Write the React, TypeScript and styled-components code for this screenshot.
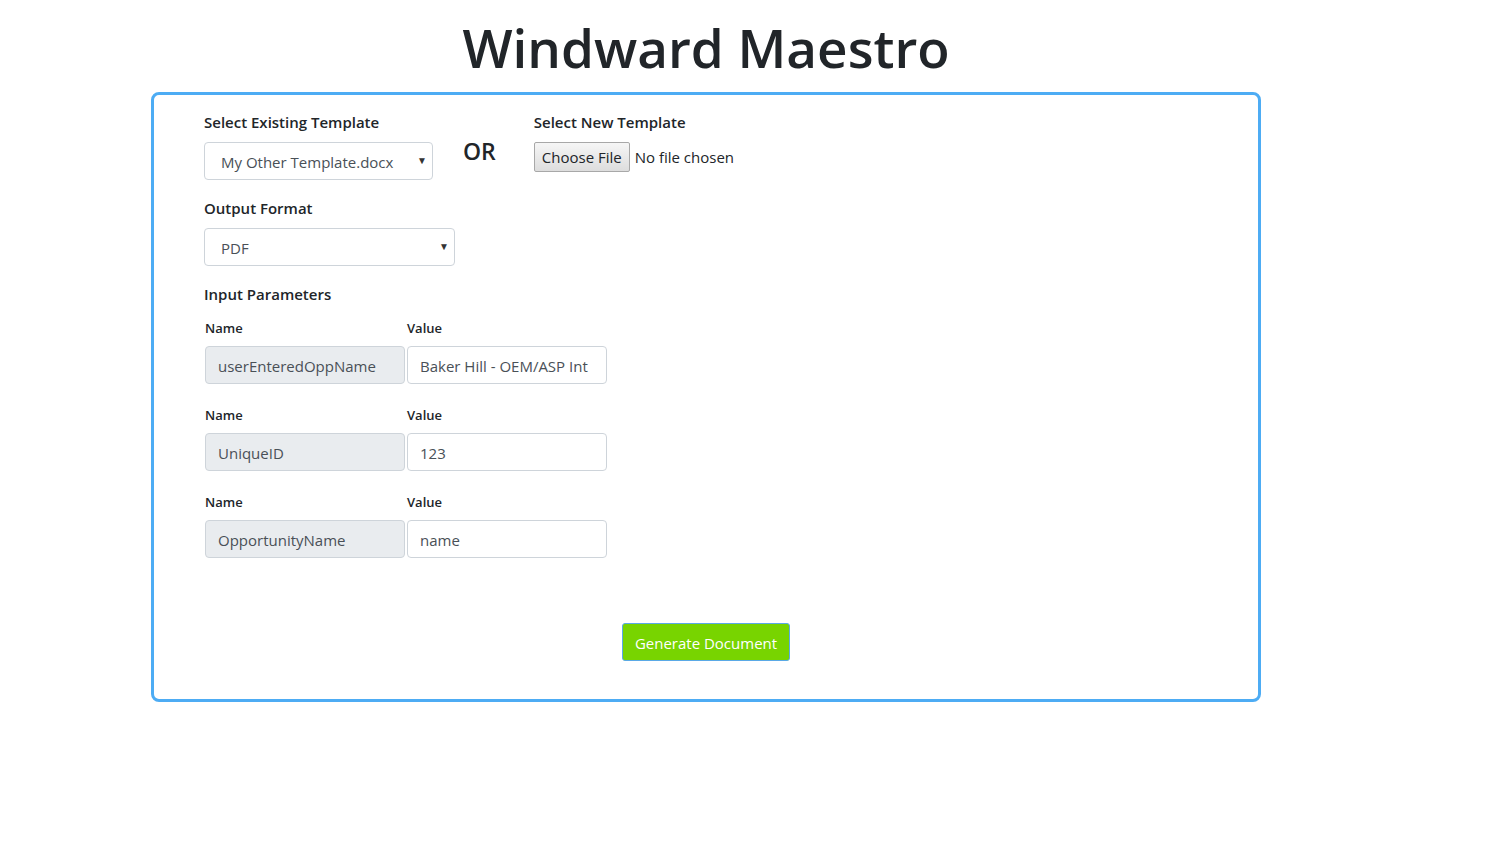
import React from "react";
import styled, { createGlobalStyle } from "styled-components";

const GlobalStyle = createGlobalStyle`
  html, body {
    margin: 0;
    padding: 0;
    background: #ffffff;
  }
  body {
    font-family: "Segoe UI", "Open Sans", "Noto Sans", sans-serif;
    font-size: 15px;
    line-height: 1.5;
    color: #212529;
  }
  * { box-sizing: border-box; }
`;

const Page = styled.div`
  width: 1110px;
  margin-left: 151px;
  padding-top: 12px;
`;

const Title = styled.h1`
  margin: 0 0 10px 0;
  height: 70px;
  text-align: center;
  font-size: 53px;
  font-weight: 600;
  line-height: 72px;
  color: #212529;
`;

const Card = styled.form`
  border: 3px solid #4dacf4;
  border-radius: 8px;
  padding: 15px 50px 38px 50px;
  height: 610px;
`;

const TopRow = styled.div`
  display: flex;
  align-items: flex-start;
`;

const Field = styled.div<{ $width: number; $mb?: number }>`
  width: ${(p) => p.$width}px;
  margin-bottom: ${(p) => (p.$mb ?? 16)}px;
`;

const Label = styled.label`
  display: block;
  margin-bottom: 8px;
  font-size: 15px;
  font-weight: 600;
  line-height: 24px;
  color: #212529;
`;

const SelectWrap = styled.div`
  position: relative;
  width: 100%;
`;

const Select = styled.select`
  appearance: none;
  -webkit-appearance: none;
  display: block;
  width: 100%;
  height: 38px;
  padding: 1px 24px 0 16px;
  font-family: inherit;
  font-size: 15px;
  color: #495057;
  background: #ffffff;
  border: 1px solid #ced4da;
  border-radius: 4px;
  outline: none;
`;

const Caret = styled.span`
  position: absolute;
  right: 6px;
  top: 11px;
  font-size: 10px;
  line-height: 14px;
  color: #333;
  pointer-events: none;
`;

const OrText = styled.div`
  margin: 26px 38px 0 30px;
  font-size: 23px;
  font-weight: 600;
  line-height: 30px;
  color: #212529;
`;

const FileRow = styled.div`
  display: flex;
  align-items: center;
  gap: 5px;
  height: 29px;
`;

const ChooseButton = styled.button`
  height: 30px;
  padding: 0 7px;
  font-family: inherit;
  font-size: 15px;
  color: #212529;
  background: linear-gradient(#f6f6f6, #dddddd);
  border: 1px solid #a8a8a8;
  border-radius: 2px;
`;

const NoFile = styled.span`
  font-size: 15px;
  color: #212529;
  padding-top: 1px;
`;

const SectionLabel = styled(Label)`
  margin-bottom: 11px;
`;

const ParamGroup = styled.div`
  display: grid;
  grid-template-columns: 200px 200px;
  column-gap: 2px;
  margin-left: 1px;
  margin-bottom: 20px;
`;

const SmallLabel = styled.label`
  display: block;
  margin-bottom: 8px;
  padding-top: 1px;
  font-size: 13px;
  font-weight: 600;
  line-height: 20px;
  color: #212529;
`;

const TextInput = styled.input<{ $locked?: boolean }>`
  display: block;
  width: 100%;
  height: 38px;
  padding: 1px 12px 0 12px;
  font-family: inherit;
  font-size: 15px;
  color: #495057;
  background: ${(p) => (p.$locked ? "#e9ecef" : "#ffffff")};
  border: 1px solid #ced4da;
  border-radius: 4px;
  outline: none;
`;

const Actions = styled.div`
  display: flex;
  justify-content: center;
  margin-top: 65px;
`;

const GenerateButton = styled.button`
  height: 38px;
  padding: 1px 12px 0 12px;
  font-family: inherit;
  font-size: 15px;
  color: #ffffff;
  background: #78d400;
  border: 1px solid #5aa9e6;
  border-radius: 3px;
`;

const params = [
  { name: "userEnteredOppName", value: "Baker Hill - OEM/ASP Int" },
  { name: "UniqueID", value: "123" },
  { name: "OpportunityName", value: "name" },
];

export default function App() {
  return (
    <>
      <GlobalStyle />
      <Page>
        <Title>Windward Maestro</Title>
        <Card onSubmit={(e) => e.preventDefault()}>
          <TopRow>
            <Field $width={229}>
              <Label>Select Existing Template</Label>
              <SelectWrap>
                <Select defaultValue="other">
                  <option value="other">My Other Template.docx</option>
                </Select>
                <Caret>▼</Caret>
              </SelectWrap>
            </Field>
            <OrText>OR</OrText>
            <Field $width={300}>
              <Label>Select New Template</Label>
              <FileRow>
                <ChooseButton type="button">Choose File</ChooseButton>
                <NoFile>No file chosen</NoFile>
              </FileRow>
            </Field>
          </TopRow>
          <Field $width={251}>
            <Label>Output Format</Label>
            <SelectWrap>
              <Select defaultValue="pdf">
                <option value="pdf">PDF</option>
              </Select>
              <Caret>▼</Caret>
            </SelectWrap>
          </Field>
          <SectionLabel>Input Parameters</SectionLabel>
          {params.map((p) => (
            <ParamGroup key={p.name}>
              <SmallLabel>Name</SmallLabel>
              <SmallLabel>Value</SmallLabel>
              <TextInput $locked readOnly value={p.name} />
              <TextInput readOnly value={p.value} />
            </ParamGroup>
          ))}
          <Actions>
            <GenerateButton type="submit">Generate Document</GenerateButton>
          </Actions>
        </Card>
      </Page>
    </>
  );
}
